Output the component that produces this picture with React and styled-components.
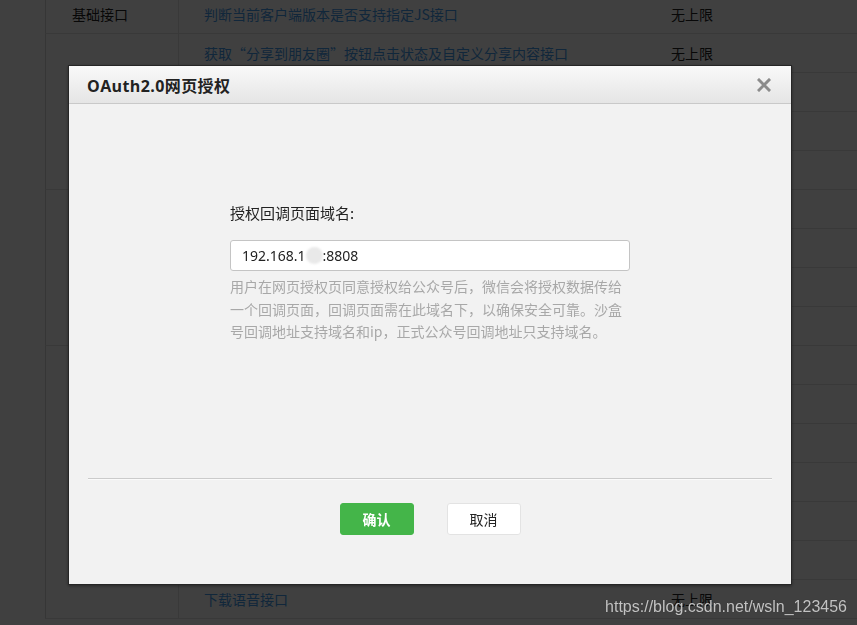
import React from "react";
import styled, { createGlobalStyle } from "styled-components";

const GlobalStyle = createGlobalStyle`
  html, body {
    margin: 0;
    padding: 0;
    background: #ffffff;
    overflow: hidden;
  }
  body {
    width: 857px;
    height: 625px;
    font-family: "Noto Sans", "Noto Sans CJK SC", sans-serif;
  }
`;

const groups = [
  { name: "基础接口", rows: ["判断当前客户端版本是否支持指定JS接口"] },
  {
    name: "分享接口",
    rows: [
      "获取“分享到朋友圈”按钮点击状态及自定义分享内容接口",
      "获取“分享给朋友”按钮点击状态及自定义分享内容接口",
      "获取“分享到QQ”按钮点击状态及自定义分享内容接口",
      "获取“分享到腾讯微博”按钮点击状态及自定义分享内容接口",
    ],
  },
  {
    name: "图像接口",
    rows: ["拍照或从手机相册中选图接口", "预览图片接口", "上传图片接口", "下载图片接口"],
  },
  {
    name: "音频接口",
    rows: [
      "开始录音接口",
      "停止录音接口",
      "播放语音接口",
      "暂停播放接口",
      "停止播放接口",
      "上传语音接口",
      "下载语音接口",
    ],
  },
];

const Page = styled.div`
  width: 857px;
  height: 625px;
  overflow: hidden;
  position: relative;
`;

const Table = styled.div`
  margin: -5px 0 0 45px;
  display: flex;
  flex-direction: column;
  font-family: "Noto Sans CJK SC", sans-serif;
  font-size: 14px;
`;

const Group = styled.div`
  display: flex;
`;

const GroupName = styled.div`
  width: 134px;
  flex: none;
  box-sizing: border-box;
  border-left: 1px solid #d8d8d8;
  border-right: 1px solid #e2e2e2;
  border-bottom: 1px solid #e4e4e4;
  display: flex;
  align-items: center;
  padding-left: 26px;
  color: #222;
`;

const Rows = styled.div`
  flex: 1;
  display: flex;
  flex-direction: column;
`;

const Row = styled.div`
  height: 39px;
  box-sizing: border-box;
  border-bottom: 1px solid #e4e4e4;
  display: flex;
  align-items: center;
`;

const LinkCell = styled.a`
  width: 467px;
  flex: none;
  padding-left: 25px;
  color: #459ae9;
  text-decoration: none;
  white-space: nowrap;
`;

const LimitCell = styled.div`
  color: #222;
  white-space: nowrap;
`;

const Overlay = styled.div`
  position: fixed;
  inset: 0;
  background: rgba(0, 0, 0, 0.75);
  display: flex;
  align-items: flex-start;
  justify-content: flex-start;
  padding: 65px 0 0 68px;
`;

const Dialog = styled.div`
  width: 724px;
  height: 520px;
  box-sizing: border-box;
  border: 1px solid #262626;
  background: #f2f2f2;
  display: flex;
  flex-direction: column;
  box-shadow: 0 1px 3px rgba(0, 0, 0, 0.4);
`;

const Header = styled.div`
  height: 38px;
  box-sizing: border-box;
  background: linear-gradient(#f9f9f9, #e5e5e5);
  border-bottom: 1px solid #c9c9c9;
  display: flex;
  align-items: center;
  justify-content: space-between;
  padding: 0 20px 0 18px;
`;

const Title = styled.h3`
  margin: 0;
  font-family: "Open Sans", "Noto Sans CJK SC", sans-serif;
  font-size: 16px;
  font-weight: 700;
  letter-spacing: 0.4px;
  color: #222;
`;

const Close = styled.button`
  border: 0;
  padding: 0;
  background: none;
  width: 14px;
  height: 14px;
  display: flex;
  cursor: pointer;
`;

const Body = styled.div`
  flex: 1;
  padding: 99px 0 0 161px;
  display: flex;
  flex-direction: column;
  align-items: flex-start;
`;

const Label = styled.label`
  font-family: "Noto Sans CJK SC", sans-serif;
  font-size: 15px;
  line-height: 20px;
  color: #222;
`;

const Field = styled.div`
  margin-top: 17px;
  width: 400px;
  height: 31px;
  box-sizing: border-box;
  background: #fff;
  border: 1px solid #c4c4c4;
  border-radius: 3px;
  padding: 0 11px;
  display: flex;
  align-items: center;
  font-family: "Noto Sans", "Open Sans", sans-serif;
  font-size: 14px;
  color: #222;
`;

const Redacted = styled.span`
  display: inline-block;
  width: 17px;
  height: 17px;
  border-radius: 50%;
  background: #e9e9e9;
  filter: blur(1px);
`;

const Help = styled.p`
  margin: 4px 0 0;
  width: 400px;
  font-family: "Noto Sans CJK SC", sans-serif;
  font-size: 14px;
  line-height: 22.5px;
  color: #a8a8a8;
`;

const Divider = styled.hr`
  margin: 0 19px;
  height: 0;
  border: 0;
  border-top: 1px solid #cbcbcb;
  border-bottom: 1px solid #fafafa;
`;

const Footer = styled.div`
  height: 104px;
  box-sizing: border-box;
  padding-top: 23px;
  display: flex;
  justify-content: center;
  align-items: flex-start;
  gap: 33px;
`;

const Button = styled.button`
  width: 74px;
  height: 32px;
  box-sizing: border-box;
  border-radius: 3px;
  border: 1px solid ${(p) => (p.$primary ? "#44b549" : "#e3e3e3")};
  background: ${(p) => (p.$primary ? "#44b549" : "#ffffff")};
  color: ${(p) => (p.$primary ? "#ffffff" : "#222")};
  font-family: "Noto Sans CJK SC", sans-serif;
  font-size: 14px;
  font-weight: ${(p) => (p.$primary ? 700 : 400)};
  padding: 0;
  cursor: pointer;
`;

const Watermark = styled.div`
  position: absolute;
  right: 10px;
  bottom: 9px;
  font-family: "Liberation Sans", Arial, sans-serif;
  font-size: 16px;
  color: #c2c2c2;
  text-shadow: 0 0 1px rgba(0, 0, 0, 0.3);
  white-space: nowrap;
`;

export default function App() {
  return (
    <Page>
      <GlobalStyle />
      <Table>
        {groups.map((g) => (
          <Group key={g.name}>
            <GroupName>{g.name}</GroupName>
            <Rows>
              {g.rows.map((r) => (
                <Row key={r}>
                  <LinkCell href="#">{r}</LinkCell>
                  <LimitCell>无上限</LimitCell>
                </Row>
              ))}
            </Rows>
          </Group>
        ))}
      </Table>
      <Overlay>
        <Dialog>
          <Header>
            <Title>OAuth2.0网页授权</Title>
            <Close aria-label="关闭">
              <svg width="14" height="14" viewBox="0 0 14 14">
                <path d="M2 2 L12 12 M12 2 L2 12" stroke="#8c8c8c" strokeWidth="3" strokeLinecap="square" />
              </svg>
            </Close>
          </Header>
          <Body>
            <Label>授权回调页面域名:</Label>
            <Field>
              192.168.1<Redacted />:8808
            </Field>
            <Help>
              用户在网页授权页同意授权给公众号后，微信会将授权数据传给一个回调页面，回调页面需在此域名下，以确保安全可靠。沙盒号回调地址支持域名和ip，正式公众号回调地址只支持域名。
            </Help>
          </Body>
          <Divider />
          <Footer>
            <Button $primary>确认</Button>
            <Button>取消</Button>
          </Footer>
        </Dialog>
      </Overlay>
      <Watermark>https://blog.csdn.net/wsln_123456</Watermark>
    </Page>
  );
}
